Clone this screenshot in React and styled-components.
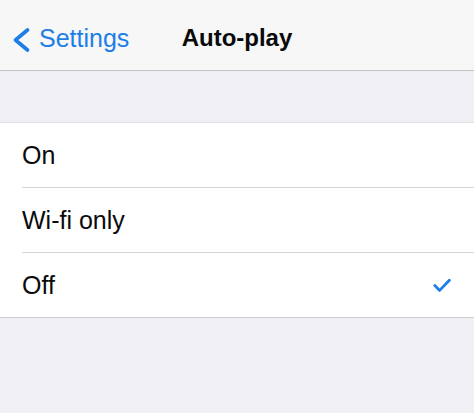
import React, { useState } from "react";
import styled, { createGlobalStyle } from "styled-components";

const GlobalStyle = createGlobalStyle`
  html, body {
    margin: 0;
    padding: 0;
    background: #efeff4;
    font-family: "Liberation Sans", Arial, sans-serif;
    -webkit-font-smoothing: antialiased;
  }
`;

const Screen = styled.div`
  width: 474px;
  min-height: 413px;
  background: #efeff4;
`;

const NavBar = styled.div`
  height: 71px;
  box-sizing: border-box;
  padding-top: 6px;
  display: grid;
  grid-template-columns: 1fr auto 1fr;
  align-items: center;
  background: #f7f7f8;
  border-bottom: 1px solid #c4c4c8;
`;

const BackButton = styled.button`
  justify-self: start;
  display: flex;
  align-items: center;
  gap: 9px;
  margin: 0;
  padding: 0 0 0 12px;
  border: none;
  background: none;
  color: #1c7ee6;
  font-family: inherit;
  font-size: 25px;
  cursor: pointer;

  svg {
    margin-top: 4px;
  }
`;

const Title = styled.div`
  font-size: 24px;
  font-weight: bold;
  color: #0a0a0a;
`;

const Gap = styled.div`
  height: 51px;
`;

const List = styled.div`
  background: #fff;
  border-top: 1px solid #e3e3e6;
  border-bottom: 1px solid #cfcfd3;
`;

const Row = styled.div`
  height: 64px;
  display: flex;
  align-items: center;
  justify-content: space-between;
  padding: 0 23px 0 22px;
  cursor: pointer;

  & + & {
    border-top: 1px solid #d3d3d6;
    margin-left: 22px;
    padding-left: 0;
  }
`;

const Label = styled.span`
  font-size: 25px;
  color: #0a0a0a;
`;

const Check = () => (
  <svg width="18" height="15" viewBox="0 0 18 15">
    <polyline
      points="1.8,7.6 6.6,12.4 16.4,2.2"
      fill="none"
      stroke="#1c7ee6"
      strokeWidth="2.8"
      strokeLinecap="round"
      strokeLinejoin="round"
    />
  </svg>
);

const Chevron = () => (
  <svg width="18" height="24" viewBox="0 0 18 24">
    <polyline
      points="15.5,2 3.5,12 15.5,22"
      fill="none"
      stroke="#1c7ee6"
      strokeWidth="3.6"
      strokeLinecap="round"
      strokeLinejoin="round"
    />
  </svg>
);

const options = ["On", "Wi-fi only", "Off"];

const App = () => {
  const [selected, setSelected] = useState("Off");

  return (
    <Screen>
      <GlobalStyle />
      <NavBar>
        <BackButton>
          <Chevron />
          Settings
        </BackButton>
        <Title>Auto-play</Title>
        <div />
      </NavBar>
      <Gap />
      <List>
        {options.map(opt => (
          <Row key={opt} onClick={() => setSelected(opt)}>
            <Label>{opt}</Label>
            {selected === opt && <Check />}
          </Row>
        ))}
      </List>
    </Screen>
  );
};

export default App;
